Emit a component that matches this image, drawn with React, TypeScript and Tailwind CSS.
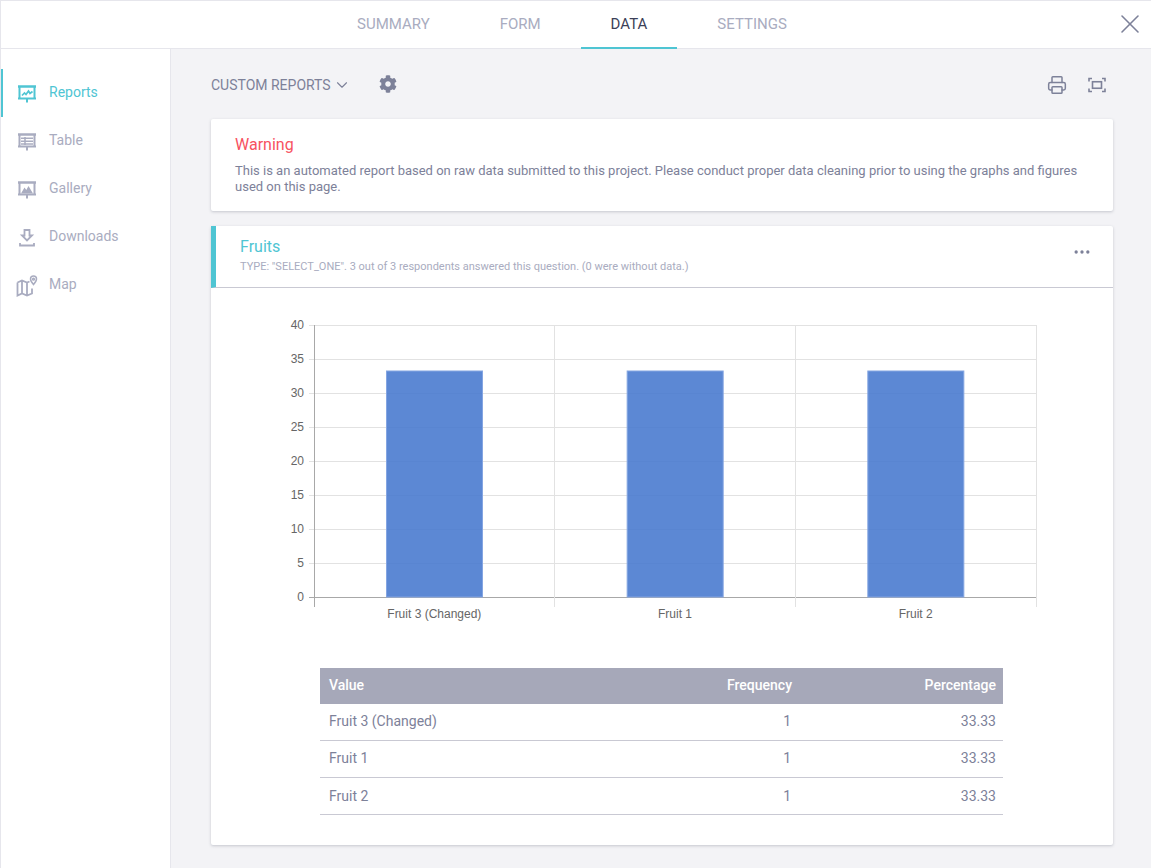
import { ChevronDown, Ellipsis, Printer, X } from "lucide-react";
import { FaCog } from "react-icons/fa";

const tabs = ["SUMMARY", "FORM", "DATA", "SETTINGS"];

const PresentationFrame = ({ children }: { children: React.ReactNode }) => (
  <svg viewBox="0 0 18 18" className="h-[18px] w-[18px]" fill="none" stroke="currentColor">
    <path d="M0 1.5h18" strokeWidth="2.5" />
    <path d="M0 13.500h18" strokeWidth="2" />
    <path d="M1.500 1.500v12M16.500 1.500v12" strokeWidth="2" />
    <path d="M9 14v3.500" strokeWidth="2" />
    {children}
  </svg>
);

const ReportsIcon = () => (
  <PresentationFrame>
    <path d="M4 10.500l2.500-2.500 1.500 1.500 2.500-3.500 1.500 2.500 2.500-2" strokeWidth="1.700" />
  </PresentationFrame>
);

const TableIcon = () => (
  <PresentationFrame>
    <path d="M3 5.200h12M3 8.200h12M3 11h12M7 4v8" strokeWidth="1.500" />
  </PresentationFrame>
);

const GalleryIcon = () => (
  <PresentationFrame>
    <path d="M3 12.500l3.500-6 1.800 2.500 2.200-4 4.500 7.500z" fill="currentColor" stroke="none" />
  </PresentationFrame>
);

const DownloadsIcon = () => (
  <svg viewBox="0 0 18 18" className="h-[18px] w-[18px]" fill="none" stroke="currentColor" strokeWidth="1.800">
    <path d="M6.500 1h5v5.500h2.500L9 11.500 4 6.500h2.500z" />
    <path d="M2 14v2.500h14V14" />
  </svg>
);

const MapIcon = () => (
  <svg viewBox="0 0 22 22" className="h-[22px] w-[22px]" fill="none" stroke="currentColor" strokeWidth="1.800">
    <path d="M1.500 7.500l4.500-2 5 2 2.500-1M1.500 7.500v13l4.500-2 5 2 5-2v-5M6 5.500v13M11 7.500v13" />
    <path d="M17.500 1c-2 0-3 1.500-3 3 0 2 3 5.500 3 5.500s3-3.500 3-5.500c0-1.500-1-3-3-3z" strokeWidth="1.500" />
    <circle cx="17.500" cy="4.200" r="0.700" />
  </svg>
);

const FullscreenIcon = () => (
  <svg viewBox="0 0 18 16" className="h-4 w-[18px]" fill="none" stroke="currentColor" strokeWidth="1.600">
    <path d="M1 4.500V1.500h3M14 1.500h3v3M17 11.500v3h-3M4 14.500H1v-3" />
    <rect x="4.500" y="4.750" width="9" height="6.500" />
  </svg>
);

const navItems = [
  { label: "Reports", icon: <ReportsIcon />, active: true },
  { label: "Table", icon: <TableIcon /> },
  { label: "Gallery", icon: <GalleryIcon /> },
  { label: "Downloads", icon: <DownloadsIcon /> },
  { label: "Map", icon: <MapIcon /> },
];

const rows = [
  { value: "Fruit 3 (Changed)", frequency: 1, percentage: "33.33", height: "h-[36px] [&>td]:pb-[2px]" },
  { value: "Fruit 1", frequency: 1, percentage: "33.33", height: "h-[37px] [&>td]:pb-[2px]" },
  { value: "Fruit 2", frequency: 1, percentage: "33.33", height: "h-[37px]" },
];

const yTicks = [0, 5, 10, 15, 20, 25, 30, 35, 40];

const BarChart = () => {
  const left = 55;
  const right = 777;
  const top = 37;
  const bottom = 309;
  const band = (right - left) / 3;
  const labels = ["Fruit 3 (Changed)", "Fruit 1", "Fruit 2"];

  return (
    <svg width="800" height="340" viewBox="0 0 800 340" className="block" style={{ fontFamily: "'Liberation Sans', Arial, sans-serif" }}>
      {yTicks.map((t) => {
        const y = bottom - (t / 40) * (bottom - top) + 0.5;
        return (
          <g key={t}>
            <line x1={left - 5} x2={right} y1={y} y2={y} stroke={t === 0 ? "#a8a8a8" : "#e2e2e2"} />
            <text x={left - 10} y={y + 3.5} textAnchor="end" fontSize="12" fill="#666">
              {t}
            </text>
          </g>
        );
      })}
      {[0, 1, 2, 3].map((i) => (
        <line
          key={i}
          x1={Math.floor(left + band * i) + 0.5}
          x2={Math.floor(left + band * i) + 0.5}
          y1={top}
          y2={bottom + 10}
          stroke={i === 0 ? "#a8a8a8" : "#e2e2e2"}
        />
      ))}
      {labels.map((label, i) => (
        <g key={label}>
          <rect x={left + band * i + 72.5} y={83} width="96" height={bottom - 83} fill="#4a7bcf" fillOpacity="0.9" stroke="#84a5e2" />
          <text x={left + band * i + band / 2} y={330} textAnchor="middle" fontSize="12" fill="#666">
            {label}
          </text>
        </g>
      ))}
    </svg>
  );
};

export default function App() {
  return (
    <div className="flex h-[868px] w-[1151px] flex-col overflow-hidden border-t border-l border-[#e6e6ec] bg-white font-['Roboto',sans-serif] text-sm">
      {/* Header */}
      <header className="relative flex h-[48px] shrink-0 border-b border-[#e6e6ec] bg-white pl-[326px]">
        <nav className="flex gap-[10px]">
          {tabs.map((tab) => (
            <div
              key={tab}
              className={`-mb-px flex items-center border-b-2 px-[30px] pt-[2px] text-[15px] ${
                tab === "DATA" ? "border-[#4fc5d3] text-[#3c3f58]" : "border-transparent text-[#a9acc0]"
              }`}
            >
              {tab}
            </div>
          ))}
        </nav>
        <X className="absolute top-[7px] right-[5px] h-8 w-8 text-[#7d8199]" strokeWidth={1.2} />
      </header>

      <div className="flex min-h-0 flex-1">
        {/* Sidebar */}
        <aside className="w-[170px] shrink-0 border-r border-[#e6e6ec] bg-white pt-[20px]">
          {navItems.map((item) => (
            <div
              key={item.label}
              className={`flex h-[48px] items-center border-l-2 ${
                item.active ? "border-[#4fc5d3] text-[#4fc5d3]" : "border-transparent text-[#a9acc0]"
              }`}
            >
              <span className="flex w-[46px] justify-center pt-px pl-px">{item.icon}</span>
              <span className="pb-[2px]">{item.label}</span>
            </div>
          ))}
        </aside>

        {/* Main */}
        <main className="flex-1 bg-[#f3f3f6] pr-[38px] pl-[40px]">
          <div className="flex h-[70px] items-center pt-px text-[#7d8199]">
            <span className="pt-px text-[14px]">CUSTOM REPORTS</span>
            <ChevronDown className="ml-[2px] h-[18px] w-[18px]" strokeWidth={1.5} />
            <FaCog className="mb-px ml-[28px] h-[18px] w-[18px]" />
            <div className="ml-auto flex items-center gap-[21px] pr-[7px]">
              <Printer className="h-5 w-5" strokeWidth={1.8} />
              <FullscreenIcon />
            </div>
          </div>

          <section className="mb-[15px] h-[92px] rounded-[2px] bg-white px-[24px] pt-[16px] shadow-[0_1px_3px_rgba(60,63,88,0.25)]">
            <h2 className="mb-[8px] text-[16px] leading-[20px] text-[#f7525f]">Warning</h2>
            <p className="text-[13px] leading-[16px] text-[#7d8199]">
              This is an automated report based on raw data submitted to this project. Please conduct proper data cleaning prior to using the graphs and figures used on this page.
            </p>
          </section>

          <section className="h-[619px] rounded-[2px] bg-white shadow-[0_1px_3px_rgba(60,63,88,0.25)]">
            <div className="relative flex h-[62px] flex-col border-b border-[#c9c9d3] border-l-[5px] border-l-[#4fc5d3] pt-[11px] pl-[24px]">
              <h3 className="text-[16px] leading-[20px] text-[#4fc5d3]">Fruits</h3>
              <p className="mt-[3px] text-[11px] leading-[14px] text-[#a9acc0]">
                TYPE: "SELECT_ONE". 3 out of 3 respondents answered this question. (0 were without data.)
              </p>
              <Ellipsis className="absolute top-[16px] right-[21px] h-5 w-5 text-[#7d8199]" />
            </div>

            <div className="pl-[48px]">
              <BarChart />
            </div>

            <div className="mt-[40px] mr-[110px] ml-[109px]">
              <table className="w-full border-collapse text-[14px] text-[#7d8199]">
                <thead>
                  <tr className="h-[36px] bg-[#a6a8b9] text-white">
                    <th className="pb-[2px] pl-[9px] text-left font-medium">Value</th>
                    <th className="pb-[2px] text-right font-medium">Frequency</th>
                    <th className="w-[211px] pr-[7px] pb-[2px] text-right font-medium">Percentage</th>
                  </tr>
                </thead>
                <tbody>
                  {rows.map((row) => (
                    <tr key={row.value} className={`${row.height} border-b border-[#c9c9d3]`}>
                      <td className="pl-[9px]">{row.value}</td>
                      <td className="pr-px text-right">{row.frequency}</td>
                      <td className="pr-[7px] text-right">{row.percentage}</td>
                    </tr>
                  ))}
                </tbody>
              </table>
            </div>
          </section>
        </main>
      </div>
    </div>
  );
}
